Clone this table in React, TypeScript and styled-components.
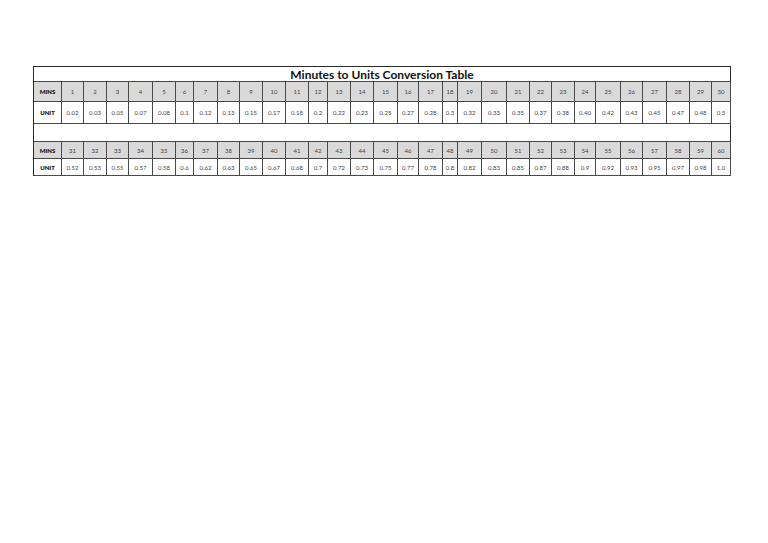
import React from 'react';
import styled, { createGlobalStyle } from 'styled-components';

const GlobalStyle = createGlobalStyle`
  html, body {
    margin: 0;
    padding: 0;
    background: #ffffff;
  }
  body {
    font-family: Lato, "Open Sans", "Liberation Sans", sans-serif;
  }
`;

// column widths measured from the sheet's grid lines
const COLS = [28, 22, 23, 22, 24, 23, 18, 24, 22, 23, 23, 23, 19, 23, 23, 24, 21, 24, 15, 24, 25, 23, 22, 23, 21, 25, 22, 24, 23, 22, 19];

const firstUnits = ['0.02', '0.03', '0.05', '0.07', '0.08', '0.1', '0.12', '0.13', '0.15', '0.17', '0.18', '0.2', '0.22', '0.23', '0.25', '0.27', '0.28', '0.3', '0.32', '0.33', '0.35', '0.37', '0.38', '0.40', '0.42', '0.43', '0.45', '0.47', '0.48', '0.5'];
const secondUnits = ['0.52', '0.53', '0.55', '0.57', '0.58', '0.6', '0.62', '0.63', '0.65', '0.67', '0.68', '0.7', '0.72', '0.73', '0.75', '0.77', '0.78', '0.8', '0.82', '0.83', '0.85', '0.87', '0.88', '0.9', '0.92', '0.93', '0.95', '0.97', '0.98', '1.0'];

const Page = styled.div`
  padding: 66px 0 0 33px;
`;

const Sheet = styled.div`
  display: grid;
  grid-template-columns: ${COLS.map((c) => `${c}px`).join(' ')};
  grid-template-rows: 15px 20px 22px 18px 17px 17px;
  width: max-content;
  border-left: 1px solid #2a2a2a;
  border-top: 1px solid #2a2a2a;
`;

const Cell = styled.div<{ $shade?: boolean; $head?: boolean }>`
  box-sizing: border-box;
  border-right: 1px solid #4a4a4a;
  border-bottom: 1px solid #4a4a4a;
  background: ${({ $shade }) => ($shade ? '#d9d9d9' : '#ffffff')};
  display: flex;
  align-items: center;
  justify-content: center;
  font-size: 6px;
  font-weight: ${({ $head }) => ($head ? 800 : 400)};
  color: ${({ $head }) => ($head ? '#222' : '#444')};
  white-space: nowrap;
  overflow: hidden;
`;

const WideCell = styled(Cell)`
  grid-column: 1 / -1;
  border-right-color: #2a2a2a;
`;

const Title = styled(WideCell)`
  font-size: 12px;
  font-weight: 700;
  color: #111;
`;

type BlockProps = { start: number; units: string[] };

const Block = ({ start, units }: BlockProps) => (
  <>
    <Cell $shade $head>MINS</Cell>
    {units.map((_, i) => (
      <Cell key={`m${i}`} $shade>{start + i}</Cell>
    ))}
    <Cell $head>UNIT</Cell>
    {units.map((u, i) => (
      <Cell key={`u${i}`}>{u}</Cell>
    ))}
  </>
);

const App = () => (
  <>
    <GlobalStyle />
    <Page>
      <Sheet>
        <Title>Minutes to Units Conversion Table</Title>
        <Block start={1} units={firstUnits} />
        <WideCell />
        <Block start={31} units={secondUnits} />
      </Sheet>
    </Page>
  </>
);

export default App;
